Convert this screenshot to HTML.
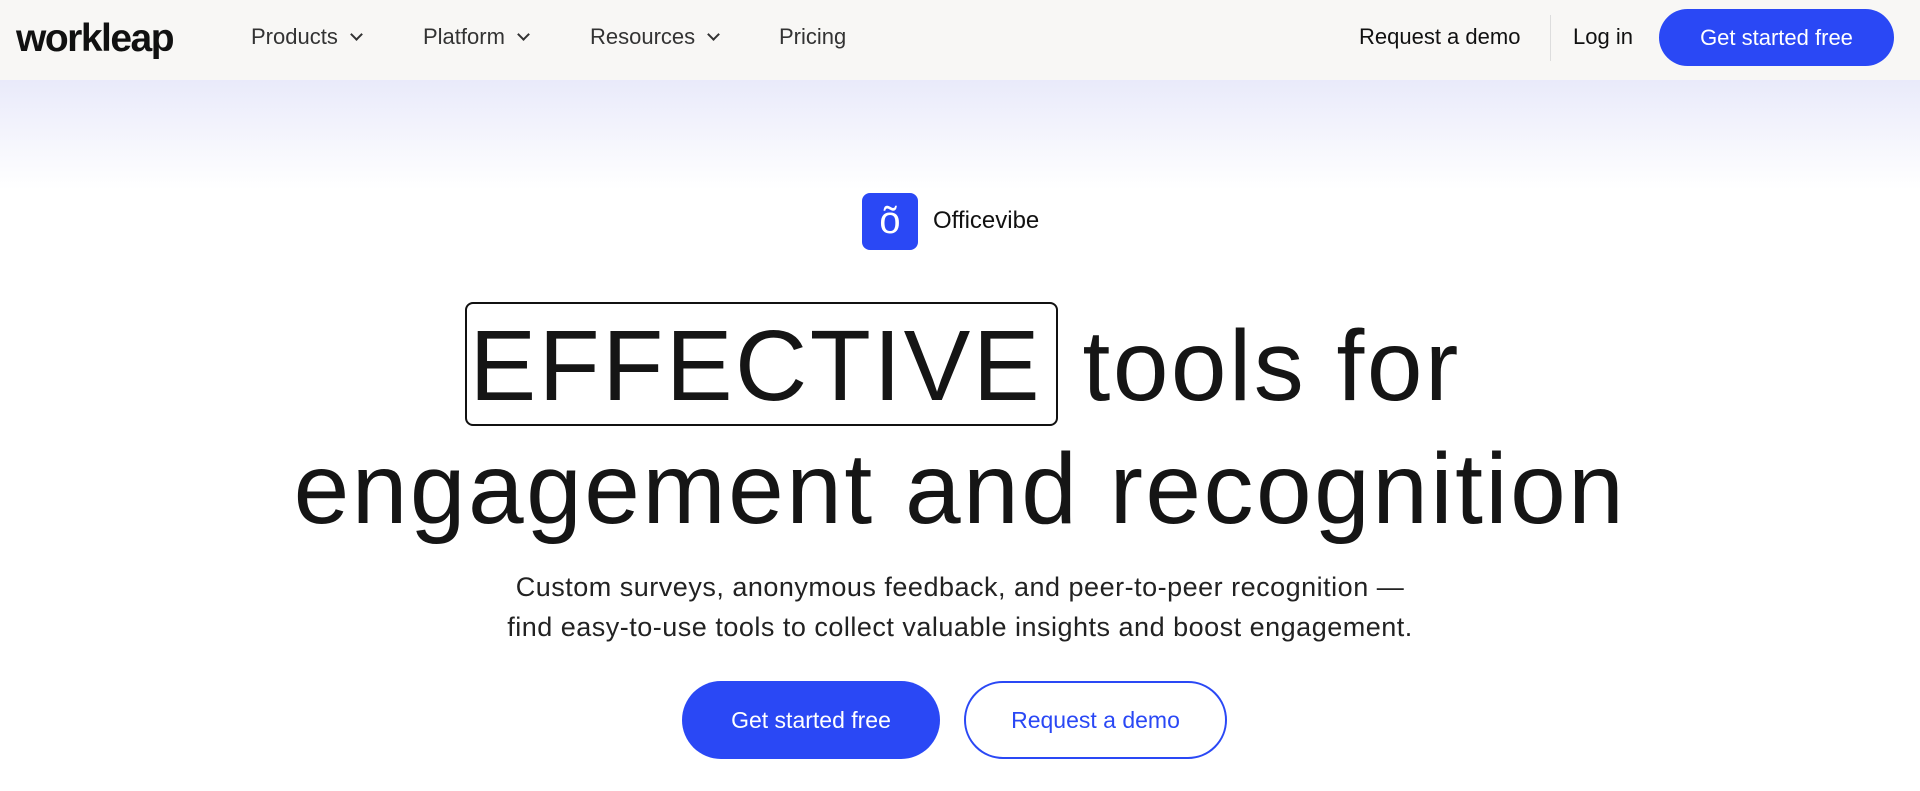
<!DOCTYPE html>
<html><head><meta charset="utf-8"><style>
*{margin:0;padding:0;box-sizing:border-box}
body{width:1920px;height:791px;overflow:hidden;font-family:"Liberation Sans",sans-serif;color:#1a1a1a;background:#fff;position:relative}
.nav{position:absolute;left:0;top:0;width:1920px;height:80px;background:#f8f7f5}
.grad{position:absolute;left:0;top:80px;width:1920px;height:110px;background:linear-gradient(#e9eafa,#fff)}
.a{position:absolute;font-size:22px;color:#333;top:24px;white-space:nowrap}
.chev{display:inline-block;width:9px;height:9px;border-right:2.5px solid #333;border-bottom:2.5px solid #333;transform:rotate(45deg);margin-left:14px;position:relative;top:-5px}
.logo{position:absolute;left:16px;top:17px;font-size:39px;font-weight:bold;letter-spacing:-1.5px;color:#111}
.btn{position:absolute;background:#2a48f5;color:#fff;border-radius:40px;display:flex;align-items:center;justify-content:center;font-size:23px}
.h{position:absolute;left:0;width:1920px;text-align:center;font-size:100px;letter-spacing:2.5px;color:#151515;white-space:nowrap}
.sub{position:absolute;left:0;width:1920px;text-align:center;font-size:27px;letter-spacing:0.5px;color:#222;line-height:40px}
</style></head><body>
<div class="nav"></div><div class="grad"></div>
<div class="logo">workleap</div>
<div class="a" style="left:251px">Products<span class="chev"></span></div>
<div class="a" style="left:423px">Platform<span class="chev"></span></div>
<div class="a" style="left:590px">Resources<span class="chev"></span></div>
<div class="a" style="left:779px">Pricing</div>
<div class="a" style="left:1359px;color:#111">Request a demo</div>
<div style="position:absolute;left:1550px;top:15px;width:1px;height:46px;background:#ddd"></div>
<div class="a" style="left:1573px;color:#111">Log in</div>
<div class="btn" style="left:1659px;top:9px;width:235px;height:57px;font-size:22px">Get started free</div>
<div style="position:absolute;left:862px;top:193px;width:56px;height:57px;background:#2a48f5;border-radius:8px;color:#fff;font-size:38px;text-align:center;line-height:57px">õ</div>
<div style="position:absolute;left:933px;top:207px;font-size:24px;color:#111">Officevibe</div>
<div style="position:absolute;left:465px;top:302px;width:593px;height:124px;border:2.5px solid #111;border-radius:8px"></div>
<div class="h" style="top:309px"><span style="display:inline-block;width:593px;text-align:center">EFFECTIVE</span> tools for</div>
<div class="h" style="top:432px">engagement and recognition</div>
<div class="sub" style="top:567px">Custom surveys, anonymous feedback, and peer-to-peer recognition —<br>find easy-to-use tools to collect valuable insights and boost engagement.</div>
<div class="btn" style="left:682px;top:681px;width:258px;height:78px">Get started free</div>
<div class="btn" style="left:964px;top:681px;width:263px;height:78px;background:#fff;color:#2a48f5;border:2.5px solid #2a48f5">Request a demo</div>
</body></html>
